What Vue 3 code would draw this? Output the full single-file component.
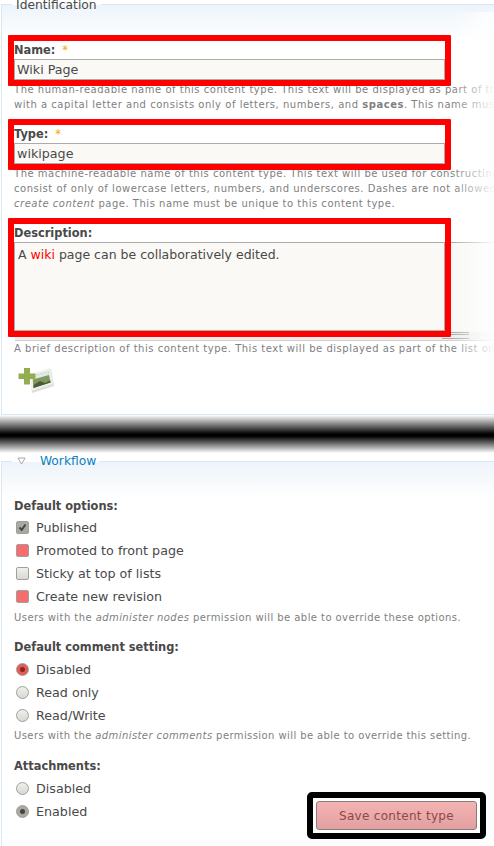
<script setup>
const defaultOptions = [
  { label: 'Published', state: 'checked' },
  { label: 'Promoted to front page', state: 'marked' },
  { label: 'Sticky at top of lists', state: '' },
  { label: 'Create new revision', state: 'marked' },
]
const commentOptions = [
  { label: 'Disabled', state: 'marked' },
  { label: 'Read only', state: '' },
  { label: 'Read/Write', state: '' },
]
const attachmentOptions = [
  { label: 'Disabled', state: '' },
  { label: 'Enabled', state: 'checked' },
]
</script>

<template>
  <div class="page">
    <fieldset class="group first">
      <legend class="title">Identification</legend>
      <div class="fade"></div>

      <div class="redBox nameBox">
        <div class="label">Name: <span class="req">*</span></div>
        <div class="input">Wiki Page</div>
      </div>
      <div class="help">
        <div class="line">The human-readable name of this content type. This text will be displayed as part of the list on the</div>
        <div class="line">with a capital letter and consists only of letters, numbers, and <b>spaces</b>. This name must be unique.</div>
      </div>

      <div class="redBox typeBox">
        <div class="label">Type: <span class="req">*</span></div>
        <div class="input">wikipage</div>
      </div>
      <div class="help">
        <div class="line">The machine-readable name of this content type. This text will be used for constructing the URL of the</div>
        <div class="line">consist of only of lowercase letters, numbers, and underscores. Dashes are not allowed. Underscores will</div>
        <div class="line"><i>create content</i> page. This name must be unique to this content type.</div>
      </div>

      <div class="descWrap">
        <div class="descTail"><div class="grip"></div></div>
        <div class="redBox descBox">
          <div class="label">Description:</div>
          <div class="textarea">A <span class="wiki">wiki</span> page can be collaboratively edited.</div>
        </div>
      </div>
      <div class="help descHelp">
        <div class="line">A brief description of this content type. This text will be displayed as part of the list on the create</div>
      </div>

      <svg class="addImage" width="36" height="26" viewBox="0 0 36 26">
        <defs>
          <filter id="soft"><feGaussianBlur stdDeviation="0.35" /></filter>
        </defs>
        <g filter="url(#soft)">
          <path d="M13 8 L33 2 L36 19 L14 26 Z" fill="#9a9a94" opacity="0.35" />
          <path d="M12 7 L32 1 L35 17 L13.500 24 Z" fill="#f0f1ec" />
          <path d="M14.500 9 L30.500 4.500 L32.500 15.500 L15.500 21 Z" fill="#7f9a5a" />
          <path d="M14.500 9 L30.500 4.500 L31 8 L15 12.500 Z" fill="#dfe8ea" />
          <path d="M15.500 18 L22 14 L27 16 L32.500 13.500 L32.500 15.500 L15.500 21 Z" fill="#4c5c38" />
          <path d="M6 1 H12 V6.500 H17.500 V12 H12 V17.500 H6 V12 H0.500 V6.500 H6 Z" fill="#93ad50" />
        </g>
      </svg>
    </fieldset>

    <div class="tear"></div>

    <fieldset class="group second">
      <legend class="title link">
        <svg class="arrow" width="9" height="8" viewBox="0 0 9 8">
          <path d="M0.800 1 H8.200 L4.500 7 Z" fill="#fff" stroke="#a8a8a8" />
        </svg>
        Workflow
      </legend>

      <div class="label section firstSection">Default options:</div>
      <div v-for="opt in defaultOptions" :key="opt.label" class="option">
        <span class="box" :class="opt.state">
          <svg v-if="opt.state === 'checked'" width="11" height="11" viewBox="0 0 11 11">
            <path d="M2.500 5.500 L4.700 8 L8.500 2.500" fill="none" stroke="#444" stroke-width="2" />
          </svg>
        </span>
        {{ opt.label }}
      </div>
      <div class="help optHelp firstHelp">Users with the <i>administer nodes</i> permission will be able to override these options.</div>

      <div class="label section lowerSection">Default comment setting:</div>
      <div v-for="opt in commentOptions" :key="opt.label" class="option">
        <span class="box radio" :class="opt.state"><span class="dot"></span></span>
        {{ opt.label }}
      </div>
      <div class="help optHelp">Users with the <i>administer comments</i> permission will be able to override this setting.</div>

      <div class="bottomRow">
        <div>
          <div class="label section attachSection">Attachments:</div>
          <div v-for="opt in attachmentOptions" :key="opt.label" class="option">
            <span class="box radio" :class="opt.state"><span class="dot"></span></span>
            {{ opt.label }}
          </div>
        </div>
        <div class="saveFrame">
          <button class="save">Save content type</button>
        </div>
      </div>
    </fieldset>
  </div>
</template>

<style scoped>
.page {
  width: 494px;
  height: 846px;
  overflow: hidden;
  background: #fff;
  color: #494949;
  font-family: "DejaVu Sans", sans-serif;
  font-size: 12.700px;
}
.group {
  margin: 0 -20px 0 1px;
  padding: 0;
  min-width: 0;
  border: 1px solid #d9e7f3;
  border-right: none;
  position: relative;
  background: linear-gradient(#edf4fa, #fff 36px);
}
.first {
  margin-top: -4px;
  height: 417px;
}
.second {
  height: 393px;
}
.title {
  margin-left: 10px;
  padding: 0 4px;
  height: 16px;
  line-height: 16px;
  font-size: 12.300px;
  color: #494949;
}
.first .title {
  line-height: 18px;
}
.link {
  color: #0b7fc4;
  padding: 0 3px 0 5px;
}
.arrow {
  margin-right: 10px;
}
.fade {
  position: absolute;
  top: 0;
  bottom: 0;
  left: 450px;
  width: 45px;
  background: linear-gradient(to right, rgba(255, 255, 255, 0), #fff);
  z-index: 2;
  pointer-events: none;
}
.redBox {
  position: relative;
  z-index: 1;
  box-sizing: border-box;
  width: 443px;
  margin-left: 6px;
  border: 6px solid #f00;
  border-radius: 1px;
  background: #fff;
}
.nameBox {
  margin-top: 23px;
  height: 51px;
}
.typeBox {
  margin-top: 7px;
  height: 51px;
}
.descBox {
  height: 119px;
}
.descWrap {
  position: relative;
  margin-top: 7px;
}
.label {
  height: 18px;
  line-height: 19px;
  font-size: 11.400px;
  font-weight: bold;
  color: #494949;
}
.req {
  color: #f7a600;
  font-weight: normal;
  margin-left: 3px;
}
.input {
  box-sizing: border-box;
  height: 21px;
  line-height: 20px;
  padding-left: 2px;
  border: 1px solid #ababab;
  background: #faf9f6;
}
.textarea {
  box-sizing: border-box;
  height: 89px;
  padding: 3px 3px;
  line-height: 17px;
  font-size: 12.500px;
  border: 1px solid #ababab;
  background: #faf9f6;
}
.wiki {
  color: #f00;
}
.descTail {
  position: absolute;
  left: 13px;
  right: 0;
  top: 24px;
  height: 99px;
  box-sizing: border-box;
  border-top: 1px solid #ababab;
  border-bottom: 1px solid #d0d0d0;
  background: linear-gradient(#f8f8f6, #f8f8f6 88px, #eee 89px);
}
.grip {
  position: absolute;
  left: 427px;
  bottom: 1px;
  width: 27px;
  height: 5px;
  border-top: 1px solid #aaa;
  border-bottom: 1px solid #aaa;
  background: linear-gradient(#eee 1px, #aaa 1px, #aaa 2px, #eee 2px);
}
.help {
  font-size: 10px;
  line-height: 15px;
  letter-spacing: 0.520px;
  color: #808080;
  white-space: nowrap;
  margin-left: 12px;
}
.help:not(.optHelp) {
  margin-top: -4px;
}
.descHelp.descHelp {
  margin-top: 4px;
}
.line {
  white-space: nowrap;
}
.addImage {
  display: block;
  margin: 11px 0 0 16px;
}
.tear {
  height: 38px;
  background: linear-gradient(#fff, #000 50%, #000 56%, #fff);
}
.section {
  margin-left: 12px;
  height: 19px;
}
.firstSection {
  margin-top: 28px;
}
.option {
  display: flex;
  align-items: center;
  height: 23px;
  margin-left: 14px;
}
.box {
  box-sizing: border-box;
  width: 13px;
  height: 13px;
  margin-right: 7px;
  border: 1px solid #a0a09a;
  border-radius: 2px;
  background: linear-gradient(#f0f0ec, #d8d8d2);
  display: flex;
  align-items: center;
  justify-content: center;
}
.box.checked {
  background: #aaa89f;
}
.box.marked {
  background: #f56d6d;
}
.radio {
  border-radius: 50%;
}
.radio .dot {
  display: none;
}
.radio.checked .dot,
.radio.marked .dot {
  display: block;
  width: 5px;
  height: 5px;
  border-radius: 50%;
  background: #444;
}
.radio.marked {
  background: #e25c5c;
}
.radio.marked .dot {
  background: #8c2424;
}
.optHelp {
  margin-top: 1px;
  letter-spacing: 0.410px;
}
.firstHelp {
  margin-top: 2px;
  letter-spacing: 0.430px;
}
.lowerSection {
  margin-top: 13px;
  margin-bottom: 1px;
}
.attachSection {
  margin-bottom: 1px;
}
.bottomRow {
  display: flex;
  justify-content: space-between;
  align-items: flex-end;
  width: 484px;
  margin-top: 14px;
}
.saveFrame {
  border: 6px solid #000;
  border-radius: 5px;
  padding: 3px;
  background: #fff;
  margin-bottom: -16px;
  display: flex;
}
.save {
  width: 161px;
  height: 29px;
  padding: 0;
  border: 1px solid #8a7c7a;
  border-radius: 3px;
  background: linear-gradient(#f4b4b4, #e39f9f);
  color: #8a4a4a;
  font-family: "DejaVu Sans", sans-serif;
  font-size: 12px;
  letter-spacing: 0.300px;
}
</style>
